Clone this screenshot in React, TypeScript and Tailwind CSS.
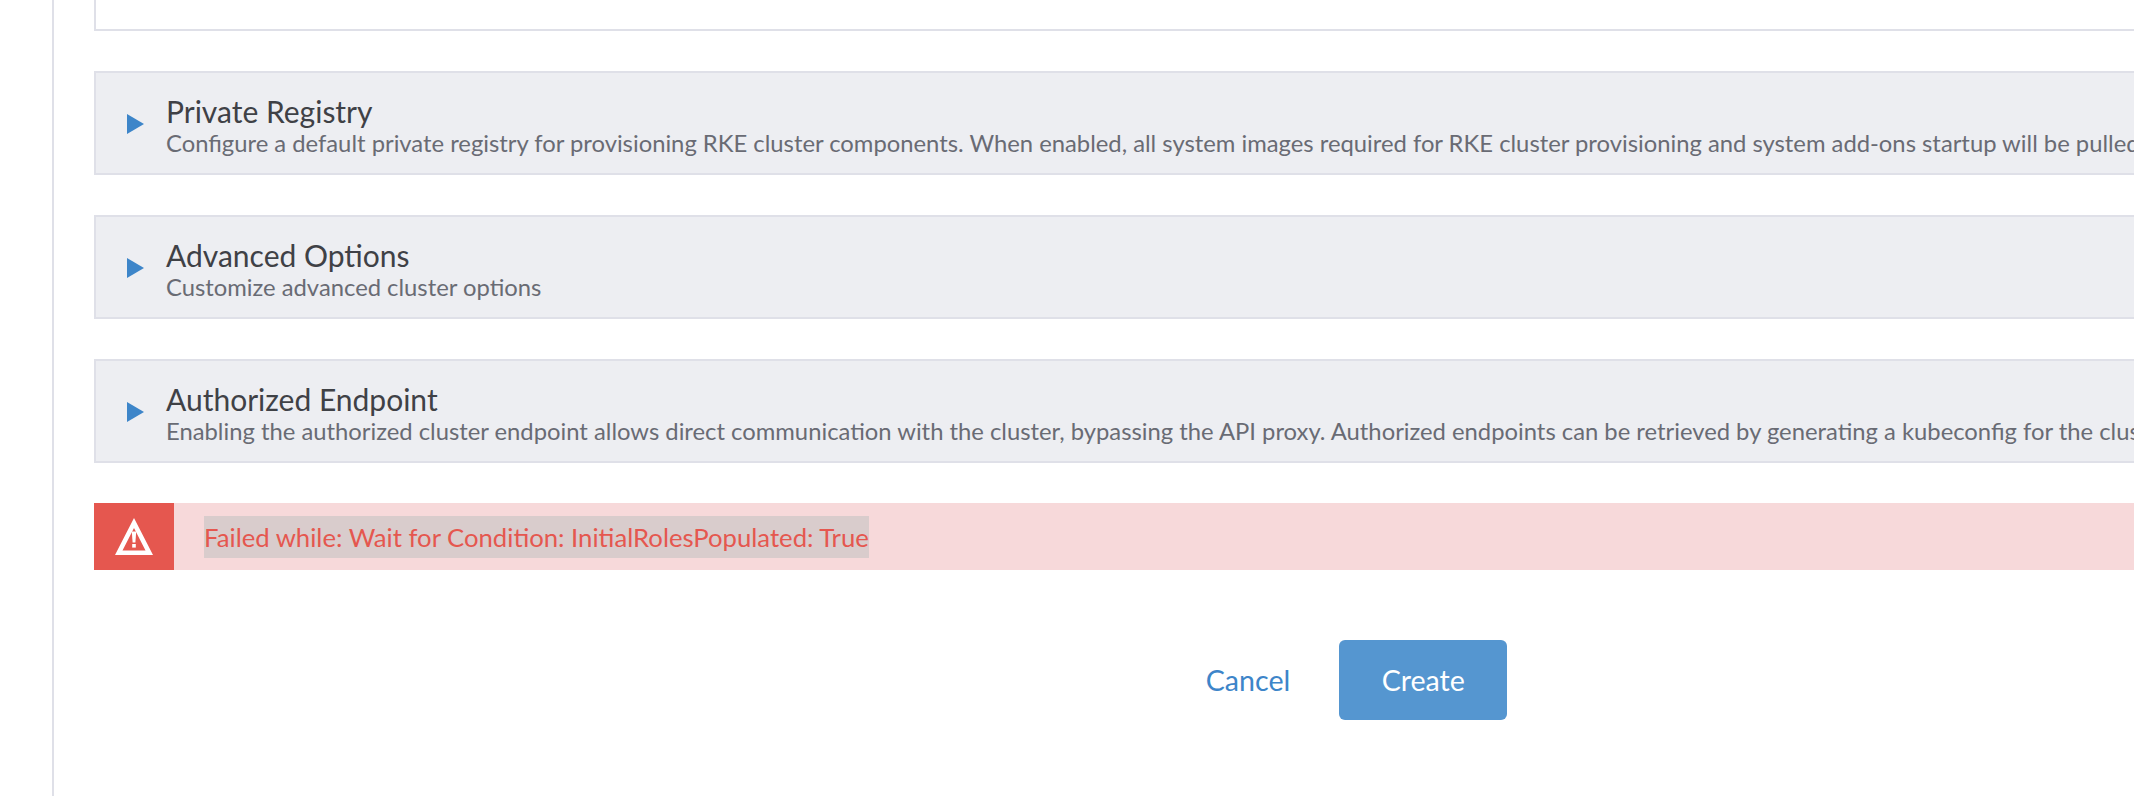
const panels = [
  {
    title: "Private Registry",
    detail:
      "Configure a default private registry for provisioning RKE cluster components. When enabled, all system images required for RKE cluster provisioning and system add-ons startup will be pulled from the configured private registry.",
  },
  {
    title: "Advanced Options",
    detail: "Customize advanced cluster options",
  },
  {
    title: "Authorized Endpoint",
    detail:
      "Enabling the authorized cluster endpoint allows direct communication with the cluster, bypassing the API proxy. Authorized endpoints can be retrieved by generating a kubeconfig for the cluster.",
  },
];

function Panel({ title, detail }: { title: string; detail: string }) {
  return (
    <section className="h-[104px] mt-10 flex items-center border-2 border-[#dfe0e8] bg-[#edeef2] pl-[31px]">
      <svg width="17" height="20" viewBox="0 0 17 20" className="shrink-0 mt-[1px]">
        <path d="M0 0 L17 10 L0 20 Z" fill="#3d85c9" />
      </svg>
      <div className="ml-[22px] min-w-0 pt-[5px]">
        <h3 className="text-[30px] leading-[35px] text-[#3f4146] whitespace-nowrap">{title}</h3>
        <p className="text-[23.8px] leading-[28px] text-[#696b74] whitespace-nowrap">{detail}</p>
      </div>
    </section>
  );
}

export default function App() {
  return (
    <div className="w-[2134px] h-[796px] overflow-hidden bg-white pl-[52px] font-['Lato',sans-serif]">
      <div className="w-[2567px] h-full border-l-2 border-[#dfe0e8] pl-[40px]">
        <div className="h-[31px] border-2 border-t-0 border-[#dfe0e8]" />
        {panels.map((p) => (
          <Panel key={p.title} title={p.title} detail={p.detail} />
        ))}
        <div className="mt-10 h-[67px] flex items-center bg-[#f7d9da]">
          <div className="w-[80px] h-full flex items-center justify-center bg-[#e5574f]">
            <svg width="38" height="37" viewBox="0 0 38 37">
              <path fillRule="evenodd" d="M19 0 L38 37 L0 37 Z M19 10 L7.5 32.5 L30.5 32.5 Z" fill="#fff" />
              <path d="M16.8 13.5 L21.2 13.5 L20.4 24.5 L17.6 24.5 Z" fill="#fff" />
              <rect x="17.2" y="26" width="3.6" height="3.6" fill="#fff" />
            </svg>
          </div>
          <span className="ml-[30px] text-[25.7px] leading-[42px] text-[#e5574f] bg-[#d9cccc]">
            Failed while: Wait for Condition: InitialRolesPopulated: True
          </span>
        </div>
        <div className="mt-[70px] flex items-center justify-center gap-[49px]">
          <button className="text-[28.6px] text-[#3d85c9]">Cancel</button>
          <button className="w-[168px] h-[80px] rounded-[6px] bg-[#5596d0] text-[28.6px] text-white">
            Create
          </button>
        </div>
      </div>
    </div>
  );
}
